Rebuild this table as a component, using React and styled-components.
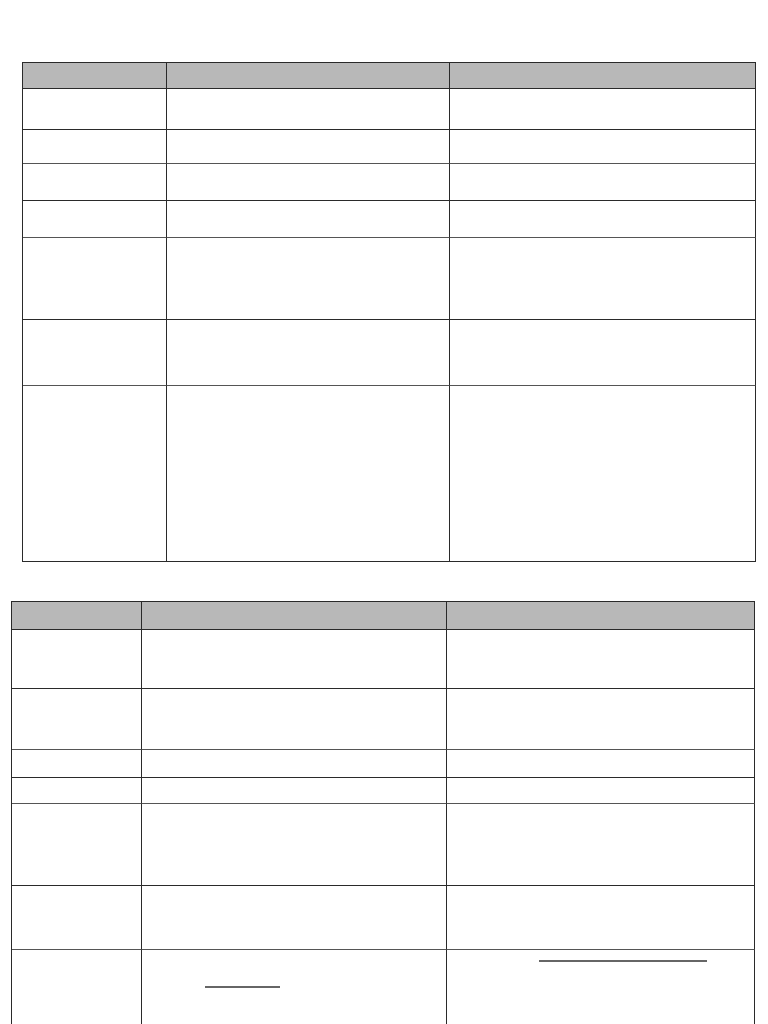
import React from "react";
import styled, { createGlobalStyle } from "styled-components";

const Global = createGlobalStyle`
  html, body { margin: 0; padding: 0; background: #ffffff; }
  body { font-family: "Liberation Sans", Arial, sans-serif; font-size: 13px; color: #111; }
  * { box-sizing: border-box; }
`;

const Page = styled.main`
  width: 768px;
  height: 1024px;
  padding-top: 62px;
  display: flex;
  flex-direction: column;
  gap: 39px;
  overflow: hidden;
`;

const Table = styled.table`
  border-collapse: separate;
  border-spacing: 0;
  table-layout: fixed;
  width: ${(p) => p.$width}px;
  margin-left: ${(p) => p.$left}px;
  border-top: 1px solid #2a2a2a;
  border-left: 1px solid #2a2a2a;
  flex: none;
`;

const HeadCell = styled.th`
  background: #b8b8b8;
  border-right: 1px solid #2a2a2a;
  border-bottom: 1px solid #2a2a2a;
  padding: 0;
  font-weight: bold;
  text-align: left;
`;

const Cell = styled.td`
  border-right: 1px solid #2a2a2a;
  border-bottom: 1px solid ${(p) => (p.$soft ? "#555" : "#2a2a2a")};
  padding: 0;
  vertical-align: top;
`;

const Row = styled.tr`
  height: ${(p) => p.$h}px;
`;

const Blank = styled.span`
  display: block;
  width: ${(p) => p.$w}px;
  height: 2px;
  margin-left: ${(p) => p.$x}px;
  margin-top: ${(p) => p.$y}px;
  background: #666;
`;

const t1 = {
  left: 22,
  cols: [144, 283, 306],
  head: 26,
  rows: [41, 34, 37, 37, 82, 66, 176],
};

const t2 = {
  left: 11,
  cols: [130, 305, 308],
  head: 28,
  rows: [59, 61, 28, 26, 82, 64, 140],
};

function Grid({ spec, extras = {} }) {
  const width = 1 + spec.cols.reduce((a, b) => a + b, 0);
  return (
    <Table $width={width} $left={spec.left}>
      <colgroup>
        {spec.cols.map((w, i) => (
          <col key={i} style={{ width: w }} />
        ))}
      </colgroup>
      <thead>
        <Row $h={spec.head}>
          {spec.cols.map((_, i) => (
            <HeadCell key={i} />
          ))}
        </Row>
      </thead>
      <tbody>
        {spec.rows.map((h, r) => (
          <Row key={r} $h={h}>
            {spec.cols.map((_, c) => {
              const ex = extras[`${r}-${c}`];
              return (
                <Cell key={c} $soft={r % 2 === 1}>
                  {ex && <Blank $x={ex.x} $y={ex.y} $w={ex.w} />}
                </Cell>
              );
            })}
          </Row>
        ))}
      </tbody>
    </Table>
  );
}

export default function App() {
  return (
    <>
      <Global />
      <Page>
        <Grid spec={t1} />
        <Grid
          spec={t2}
          extras={{
            "6-1": { x: 63, y: 36, w: 75 },
            "6-2": { x: 92, y: 10, w: 168 },
          }}
        />
      </Page>
    </>
  );
}
